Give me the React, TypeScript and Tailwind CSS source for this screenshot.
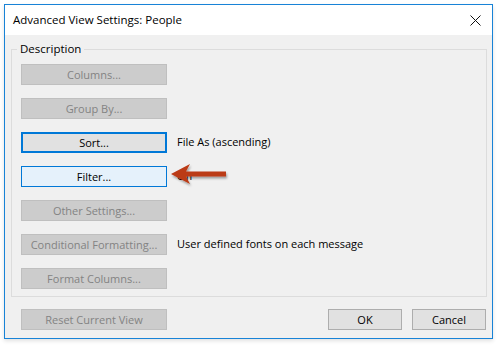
import React from "react";

const font = { fontFamily: '"Open Sans", "Noto Sans", sans-serif' };

function DisabledBtn({ label }: { label: string }) {
  return (
    <div className="w-[146px] h-[21px] shrink-0 flex items-center justify-center bg-[#cccccc] border border-[#bfbfbf] text-[#838383] text-[11px] leading-none">
      {label}
    </div>
  );
}

export default function App() {
  return (
    <div className="w-[499px] h-[345px] bg-white pt-[4px] pl-[4px]" style={font}>
      <div className="w-[489px] h-[335px] border border-[#1883d7] flex flex-col shadow-[0_2px_4px_rgba(0,0,0,0.12)]">
        <div className="h-[30px] bg-white flex items-center justify-between pl-[8px] pr-[10px] text-[11.5px] text-black">
          <span>Advanced View Settings: People</span>
          <svg width="11" height="11" viewBox="0 0 11 11" className="mr-[1px]">
            <path d="M0.5 0.5 L10.5 10.5 M10.5 0.5 L0.5 10.5" stroke="#111" strokeWidth="1" />
          </svg>
        </div>
        <div className="flex-1 bg-[#f0f0f0] relative px-[5px] pl-[6px] flex flex-col">
          <fieldset className="mt-[6px] h-[256px] border border-[#dcdcdc] pl-[9px] pr-[9px] pt-[7px]">
            <legend className="ml-[-4px] px-[3px] text-[11.5px] leading-[16px] text-black">Description</legend>
            <div className="flex flex-col gap-[13px]">
              <DisabledBtn label="Columns..." />
              <DisabledBtn label="Group By..." />
              <div className="flex items-center gap-[10px]">
                <div className="w-[146px] h-[21px] shrink-0 flex items-center justify-center bg-[#e1e1e1] border-2 border-[#0078d7] text-black text-[11px] leading-none">
                  Sort...
                </div>
                <span className="text-[11px] text-black">File As (ascending)</span>
              </div>
              <div className="flex items-center gap-[10px]">
                <div className="w-[146px] h-[21px] shrink-0 flex items-center justify-center bg-[#e5f1fb] border border-[#0078d7] text-black text-[11px] leading-none">
                  Filter...
                </div>
                <span className="text-[11px] text-black">Off</span>
              </div>
              <DisabledBtn label="Other Settings..." />
              <div className="flex items-center gap-[10px]">
                <DisabledBtn label="Conditional Formatting..." />
                <span className="text-[11px] text-black">User defined fonts on each message</span>
              </div>
              <DisabledBtn label="Format Columns..." />
            </div>
          </fieldset>
          <div className="mt-[12px] flex items-center pl-[10px] pr-[1px]">
            <DisabledBtn label="Reset Current View" />
            <div className="flex-1" />
            <div className="w-[74px] h-[21px] flex items-center justify-center bg-[#e1e1e1] border border-[#adadad] text-black text-[11px] leading-none">
              OK
            </div>
            <div className="w-[74px] h-[21px] ml-[10px] flex items-center justify-center bg-[#e1e1e1] border border-[#adadad] text-black text-[11px] leading-none">
              Cancel
            </div>
          </div>
          <svg
            className="absolute left-[163px] top-[127px]"
            width="66"
            height="26"
            viewBox="0 0 66 26"
          >
            <defs>
              <filter id="sh" x="-20%" y="-40%" width="140%" height="180%">
                <feDropShadow dx="1" dy="2" stdDeviation="1.2" floodColor="#000" floodOpacity="0.35" />
              </filter>
            </defs>
            <polygon
              points="3,12 22,2 18,9.5 58,9.5 58,14.5 18,14.5 22,22"
              fill="#bb3a17"
              filter="url(#sh)"
            />
          </svg>
        </div>
      </div>
    </div>
  );
}
